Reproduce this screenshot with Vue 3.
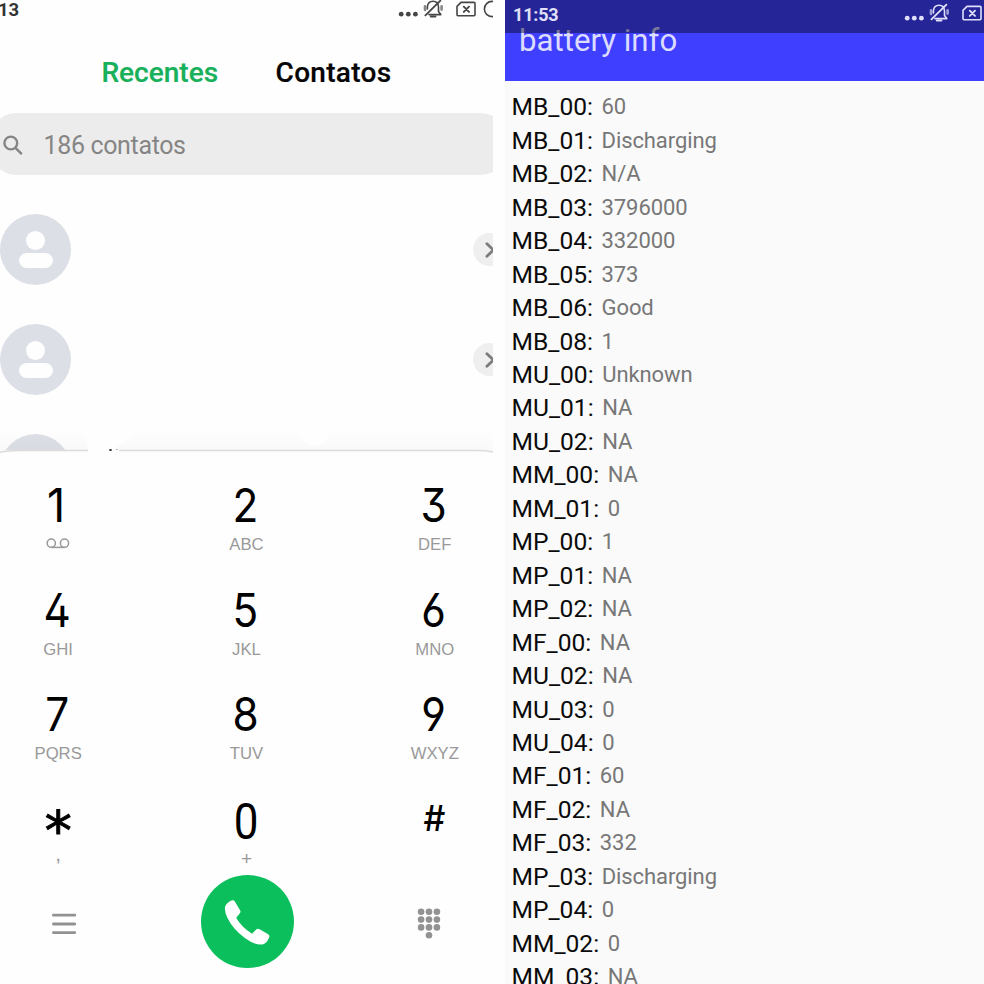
<script setup>
const keys = [
  { digit: '1', sub: '', voicemail: true, kind: 'one' },
  { digit: '2', sub: 'ABC' },
  { digit: '3', sub: 'DEF' },
  { digit: '4', sub: 'GHI' },
  { digit: '5', sub: 'JKL' },
  { digit: '6', sub: 'MNO' },
  { digit: '7', sub: 'PQRS' },
  { digit: '8', sub: 'TUV' },
  { digit: '9', sub: 'WXYZ' },
  { digit: '*', sub: ',', kind: 'star' },
  { digit: '0', sub: '+', kind: 'zero' },
  { digit: '#', sub: '', kind: 'hash' },
]

const rows = [
  ['MB_00', '60'],
  ['MB_01', 'Discharging'],
  ['MB_02', 'N/A'],
  ['MB_03', '3796000'],
  ['MB_04', '332000'],
  ['MB_05', '373'],
  ['MB_06', 'Good'],
  ['MB_08', '1'],
  ['MU_00', 'Unknown'],
  ['MU_01', 'NA'],
  ['MU_02', 'NA'],
  ['MM_00', 'NA'],
  ['MM_01', '0'],
  ['MP_00', '1'],
  ['MP_01', 'NA'],
  ['MP_02', 'NA'],
  ['MF_00', 'NA'],
  ['MU_02', 'NA'],
  ['MU_03', '0'],
  ['MU_04', '0'],
  ['MF_01', '60'],
  ['MF_02', 'NA'],
  ['MF_03', '332'],
  ['MP_03', 'Discharging'],
  ['MP_04', '0'],
  ['MM_02', '0'],
  ['MM_03', 'NA'],
]
</script>

<template>
  <div class="screen">
    <svg class="defs" width="0" height="0">
      <symbol id="status" viewBox="0 0 112 26">
        <g fill="currentColor">
          <circle cx="7.2" cy="16.2" r="2.4" />
          <circle cx="14.3" cy="16.2" r="2.4" />
          <circle cx="21.4" cy="16.2" r="2.4" />
        </g>
        <g fill="none" stroke="currentColor" stroke-width="1.6" stroke-linecap="round" stroke-linejoin="round">
          <path d="M33.4 11V8.6C33.8 5.2 36 3.3 39 3.3C42.3 3.3 44.3 5.6 44.5 9V13.6L46.8 16.6H35" />
          <path d="M36.8 18.6H41.4" stroke-width="2" />
          <path d="M31.4 17.4L46.4 2.6" stroke-width="1.8" />
          <path d="M31 8.4V12M47.6 8.4V11.6" stroke-width="2.6" opacity=".65" />
          <path d="M67 4.4H80Q81 4.4 81 5.4V16.8Q81 17.8 80 17.8H64Q63 17.8 63 16.8V8.4Z" />
          <path d="M69.8 8.7L75 13.9M75 8.7L69.8 13.9" stroke-width="1.9" />
          <circle cx="98" cy="11" r="7.6" />
        </g>
      </symbol>
    </svg>

    <section class="dialer">
      <header class="status">
        <span class="clock">13</span>
        <svg class="status-icons" width="112" height="26"><use href="#status" /></svg>
      </header>
      <nav class="tabs">
        <span class="tab active">Recentes</span>
        <span class="tab">Contatos</span>
      </nav>
      <div class="search">
        <svg width="22" height="22" viewBox="0 0 22 22" fill="none" stroke="#858585" stroke-width="2.4">
          <circle cx="8.8" cy="9" r="6.4" />
          <path d="M13.4 13.8L19.8 20.2" />
        </svg>
        <span>186 contatos</span>
      </div>
      <div class="contacts">
        <div v-for="n in 3" :key="n" class="contact">
          <div class="avatar"><i class="head"></i><i class="body"></i></div>
          <div v-if="n < 3" class="more">
            <svg width="12" height="18" viewBox="0 0 12 18" fill="none" stroke="#7b7b7b" stroke-width="2.8" stroke-linecap="round">
              <path d="M2.9 2.8L9.4 9L2.9 15.2" />
            </svg>
          </div>
        </div>
      </div>
      <svg class="edge" width="493" height="24" viewBox="0 0 493 24" fill="none">
        <defs>
          <linearGradient id="fade" x1="0" y1="0" x2="0" y2="1">
            <stop offset="0" stop-color="#000" stop-opacity="0" />
            <stop offset="1" stop-color="#000" stop-opacity=".02" />
          </linearGradient>
        </defs>
        <path d="M0 0H84L89 21H0ZM140 0H298Q302 16 314 16T330 0H493V21H112Z" fill="url(#fade)" />
        <path d="M0 22.2Q8 20.6 20 20.5H88M119 20.5H476Q486 20.5 493 22" stroke="#dcdcdd" stroke-width="1.4" />
        <ellipse cx="110.5" cy="20" rx="1.5" ry="1" fill="#333" />
        <ellipse cx="117" cy="19.5" rx="1" ry=".6" fill="#aaa" />
      </svg>
      <div class="keypad">
        <div v-for="k in keys" :key="k.digit" class="key">
          <span class="digit" :class="k.kind">{{ k.digit }}</span>
          <svg v-if="k.voicemail" class="voicemail" width="24" height="12" viewBox="0 0 24 12" fill="none" stroke="#999" stroke-width="1.5">
            <circle cx="5.3" cy="5.2" r="4.1" />
            <circle cx="18.5" cy="5.2" r="4.1" />
            <path d="M5.3 9.4H18.5" />
          </svg>
          <span v-else class="sub" :class="k.kind">{{ k.sub }}</span>
        </div>
      </div>
      <footer class="actions">
        <svg class="menu" width="26" height="22" viewBox="0 0 26 22" stroke="#929292" stroke-width="2.8" stroke-linecap="round">
          <path d="M2.4 2.2H23.8M2.4 11H23.8M2.4 19.6H23.8" />
        </svg>
        <div class="call">
          <svg width="48" height="48" viewBox="0 0 48 48" fill="#fff">
            <path d="M2 9Q3.4 4.4 8.4 2.4Q10.6 1.6 11.7 3.2L17.2 12.4Q18 13.8 17 15L13.2 20Q18.8 29.3 29 35.7L33.2 31.6Q34.8 30 36.6 31.2L45.2 36.2Q47 37.4 46.2 39.3Q44.4 44.6 40.2 46.3Q32 47.8 21.5 39.8Q9.6 31 4.2 19.6Q1.4 13 2 9Z" />
          </svg>
        </div>
        <svg class="pad" width="24" height="32" viewBox="0 0 24 32" fill="#929292">
          <template v-for="r in 3" :key="r">
            <circle v-for="c in 3" :key="c" :cx="c * 7.9 - 3.8" :cy="r * 7.8 - 4" r="3.3" />
          </template>
          <circle cx="12" cy="27.3" r="3.3" />
        </svg>
      </footer>
    </section>

    <section class="battery">
      <header class="titlebar">
        <h1>battery info</h1>
        <div class="overlay">
          <span class="time">11:53</span>
          <svg class="status-icons" width="112" height="26"><use href="#status" /></svg>
        </div>
      </header>
      <div class="list">
        <div v-for="(r, i) in rows" :key="i" class="row">
          <span class="name">{{ r[0] }}:</span>
          <span class="value">{{ r[1] }}</span>
        </div>
      </div>
    </section>
  </div>
</template>

<style>
body { background: #fff; overflow: hidden; }
</style>

<style scoped>
.screen {
  display: flex;
  gap: 12px;
  width: 984px;
  height: 984px;
  overflow: hidden;
  background: #fefefe;
  font-family: Roboto, sans-serif;
}
.defs { position: absolute; }
.dialer { width: 493px; height: 984px; overflow: hidden; display: flex; flex-direction: column; }
.status { height: 26px; flex: none; display: flex; justify-content: space-between; color: #454545; }
.clock { font-size: 18.5px; font-weight: 700; line-height: 20px; margin-left: -2px; color: #333; }
.status-icons { flex: none; margin: -2px -13px 0 0; }
.tabs { display: flex; gap: 57.5px; height: 87px; flex: none; padding-left: 101.5px; box-sizing: border-box; }
.tab {
  font-size: 28px;
  font-weight: 500;
  line-height: 33px;
  padding-top: 30px;
  letter-spacing: .3px;
  color: #050505;
  white-space: nowrap;
  -webkit-text-stroke: .2px currentColor;
}
.active { color: #18b05a; letter-spacing: 0; }
.search {
  flex: none;
  display: flex;
  align-items: center;
  gap: 19.5px;
  width: 513px;
  height: 62px;
  margin-left: -8px;
  padding-left: 10px;
  box-sizing: border-box;
  border-radius: 24px;
  background: #ececec;
  color: #858585;
  font-size: 25px;
  letter-spacing: -.35px;
  line-height: 30px;
}
.search svg { margin-top: 1px; }
.search span { padding-top: 4px; }
.contacts { height: 275px; padding-top: 39px; flex: none; overflow: hidden; box-sizing: border-box; }
.contact { height: 71px; margin-bottom: 39px; display: flex; justify-content: space-between; align-items: center; }
.avatar {
  width: 71px;
  height: 71px;
  border-radius: 50%;
  background: #dcdfe5;
  display: flex;
  flex-direction: column;
  align-items: center;
  box-sizing: border-box;
  padding-top: 17px;
}
.head { width: 19px; height: 19px; border-radius: 50%; background: #fefefe; }
.body { width: 34px; height: 15px; border-radius: 8px; background: #fefefe; margin-top: 3px; }
.more {
  width: 33px;
  height: 33px;
  margin-right: -13px;
  border-radius: 50%;
  background: #efefef;
  display: flex;
  align-items: center;
  box-sizing: border-box;
  padding-left: 11px;
}
.edge { flex: none; margin-top: -20px; }
.keypad {
  flex: none;
  display: grid;
  grid-template-columns: repeat(3, 188.3px);
  grid-auto-rows: 104.6px;
  width: 565px;
  height: 421px;
  margin-left: -36px;
  padding-top: 22px;
  box-sizing: border-box;
  background: #fefefe;
}
.key { display: flex; flex-direction: column; align-items: center; }
.digit {
  font-family: Inter, sans-serif;
  font-feature-settings: "cv09", "cv03", "cv04", "ss01";
  font-size: 47px;
  font-weight: 400;
  line-height: 57px;
  height: 58px;
  color: #000;
  transform: translateX(-1px) scaleX(.9);
}
.digit.one { transform: translateX(-2.5px) scaleX(.95); }
.sub { font-family: "Liberation Sans", sans-serif; font-size: 16.7px; line-height: 21px; color: #999; }
.voicemail { margin-top: 4px; }
.digit.star {
  font-family: "DejaVu Sans", sans-serif;
  font-size: 54px;
  line-height: 81px;
  transform: none;
  -webkit-text-stroke: 1px #000;
}
.digit.zero { font-family: Roboto, sans-serif; font-size: 50px; line-height: 64px; transform: scaleX(.88); }
.digit.hash { font-size: 36px; line-height: 57px; font-weight: 500; transform: scaleX(.95); }
.sub.star { font-size: 21px; line-height: 12px; }
.sub.zero { font-size: 19px; line-height: 22px; }
.actions {
  flex: 1;
  display: flex;
  align-items: center;
  justify-content: space-between;
  padding: 0 52px 32px 51px;
}
.menu { margin-top: 4px; }
.pad { margin-top: 4px; }
.call {
  width: 93px;
  height: 93px;
  border-radius: 50%;
  background: #0bbf5c;
  display: flex;
  align-items: center;
  justify-content: center;
}
.battery { width: 479px; flex: none; background: #fafafa; overflow: hidden; }
.titlebar { position: relative; height: 81px; background: #3f3fff; overflow: hidden; }
h1 { margin: 0; padding: 22px 0 0 14px; font-size: 31.2px; line-height: 37px; font-weight: 400; color: #dcdcff; white-space: nowrap; }
.overlay {
  position: absolute;
  inset: 0 0 auto 0;
  height: 33px;
  display: flex;
  justify-content: space-between;
  background: rgba(10, 10, 40, .48);
  color: #e0e0fa;
}
.overlay .status-icons { margin: 2px -27.5px 0 0; }
.time { font-size: 18px; font-weight: 700; line-height: 30px; margin-left: 8px; letter-spacing: -.2px; }
.list { padding: 9.4px 0 0 6.5px; }
.row { display: flex; gap: 8.6px; height: 33.46px; line-height: 33.46px; white-space: nowrap; }
.name { font-size: 24.6px; color: #0a0a0a; }
.value { font-size: 22px; color: #777; letter-spacing: -.1px; }
</style>
